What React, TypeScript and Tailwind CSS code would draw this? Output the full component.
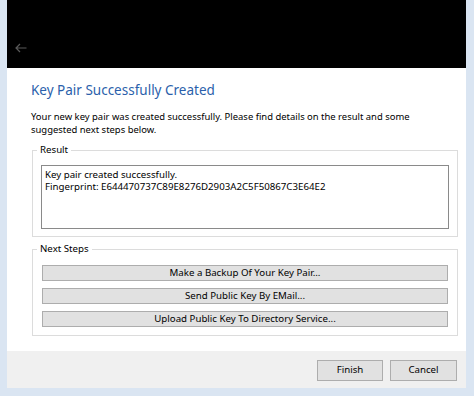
import React from "react";

const font = { fontFamily: '"Noto Sans", "Segoe UI", sans-serif' };

function StepButton({ children }: { children: React.ReactNode }) {
  return (
    <button className="h-[16px] w-full bg-[#e1e1e1] border border-[#adadad] text-[9.7px] leading-[12px] text-black flex items-center justify-center">
      {children}
    </button>
  );
}

export default function App() {
  return (
    <div style={font} className="w-[474px] h-[396px] bg-[#dae5f2] flex pl-[7px] pr-[8px] pb-[8px]">
      <div className="flex-1 flex flex-col bg-white">
        <div className="h-[68px] bg-black flex items-end pl-[8px] pb-[15px] shrink-0">
          <svg width="12" height="10" viewBox="0 0 12 10" fill="none" stroke="#5a5a5a" strokeWidth="1.2">
            <path d="M11.5 5H1M5 1L1 5l4 4" />
          </svg>
        </div>
        <div className="flex-1 flex flex-col pl-[24px] pr-[8px]">
          <div className="pt-[13px] text-[13.5px] leading-[18px] text-[#2b5fab]">Key Pair Successfully Created</div>
          <div className="mt-[11px] text-[9.45px] leading-[13px] text-black pr-[20px]">
            Your new key pair was created successfully. Please find details on the result and some suggested next steps below.
          </div>
          <fieldset className="mt-[8px] ml-[1px] border border-[#dcdcdc] px-[8px] pb-[7px]">
            <legend className="-ml-[4px] px-[3px] text-[9.7px] leading-[12px]">Result</legend>
            <div className="mt-[9px] h-[64px] border border-[#8a8a8a] px-[3px] pt-[3px] text-[9.7px] leading-[12px] text-black">
              <div>Key pair created successfully.</div>
              <div>Fingerprint: E644470737C89E8276D2903A2C5F50867C3E64E2</div>
            </div>
          </fieldset>
          <fieldset className="mt-[6px] ml-[1px] border border-[#dcdcdc] px-[9px] pb-[8px]">
            <legend className="-ml-[5px] px-[3px] text-[9.7px] leading-[12px]">Next Steps</legend>
            <div className="mt-[10px] flex flex-col gap-[7px]">
              <StepButton>Make a Backup Of Your Key Pair...</StepButton>
              <StepButton>Send Public Key By EMail...</StepButton>
              <StepButton>Upload Public Key To Directory Service...</StepButton>
            </div>
          </fieldset>
        </div>
        <div className="h-[37px] shrink-0 bg-[#f0f0f0] flex justify-end items-start pt-[9px] pr-[9px] gap-[7px]">
          <button className="w-[66px] h-[21px] bg-[#e1e1e1] border border-[#adadad] text-[9.7px] text-black">Finish</button>
          <button className="w-[67px] h-[21px] bg-[#e1e1e1] border border-[#adadad] text-[9.7px] text-black">Cancel</button>
        </div>
      </div>
    </div>
  );
}
